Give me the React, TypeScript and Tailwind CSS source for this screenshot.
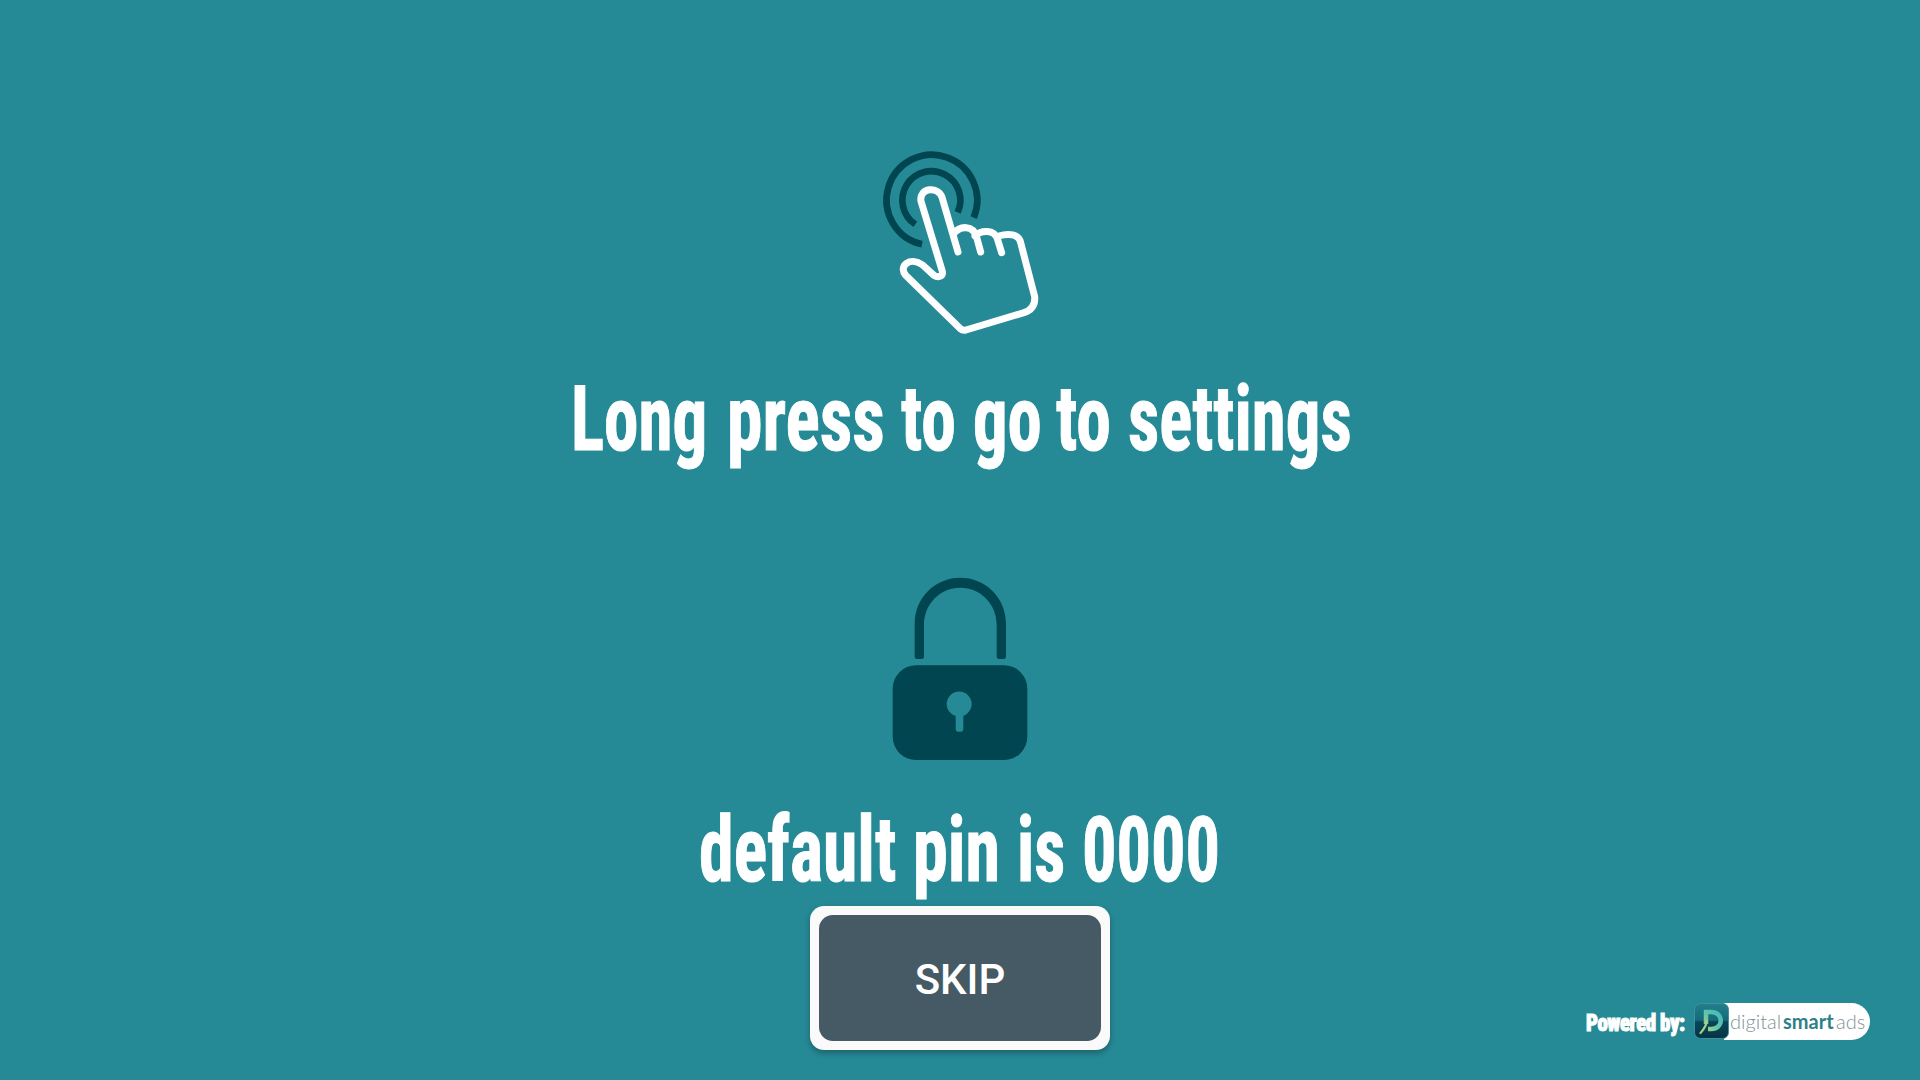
type Word = { text: string; box: string; scale: string };

const pressWords: Word[] = [
  { text: "Long", box: "w-[130px] mr-[26px]", scale: "scale-x-[0.76]" },
  { text: "press", box: "w-[154px] mr-[20px]", scale: "scale-x-[0.787]" },
  { text: "to", box: "w-[53px] mr-[19px]", scale: "scale-x-[0.765]" },
  { text: "go", box: "w-[63px] mr-[20px]", scale: "scale-x-[0.755]" },
  { text: "to", box: "w-[53px] mr-[19px]", scale: "scale-x-[0.765]" },
  { text: "settings", box: "w-[220px]", scale: "scale-x-[0.757]" },
];

const pinWords: Word[] = [
  { text: "default", box: "w-[193px] mr-[21px]", scale: "scale-x-[0.768]" },
  { text: "pin", box: "w-[81px] mr-[23px]", scale: "scale-x-[0.772]" },
  { text: "is", box: "w-[45px] mr-[20px]", scale: "scale-x-[0.75]" },
  { text: "0000", box: "w-[134px]", scale: "scale-x-[0.75]" },
];

function Headline({ words }: { words: Word[] }) {
  return (
    <h1 className="flex h-[100px] font-['Roboto_Condensed','Roboto',sans-serif] text-[91px] font-bold leading-[100px] text-white [-webkit-text-stroke:1px_#fff]">
      {words.map((word, i) => (
        <span key={i} className={`block whitespace-nowrap ${word.box}`}>
          <span className={`inline-block origin-left ${word.scale}`}>{word.text}</span>
        </span>
      ))}
    </h1>
  );
}

function TouchIcon() {
  return (
    <svg className="h-[220px] w-[200px]" viewBox="0 0 600 660" fill="none">
      <g stroke="#00454f" strokeWidth="20">
        <path d="M341 263 A136 136 0 1 0 186 343" />
        <path d="M293 247 A87 87 0 1 0 166 283" />
      </g>
      <path
        stroke="#fff"
        strokeWidth="21"
        strokeLinecap="round"
        strokeLinejoin="round"
        d="M294 366 L246 202 C236 168 176 172 183 214 L247 424 C250 440 234 444 222 436 L188 405 C150 378 114 408 137 436 L302 597 Q308 602 318 600 L492 548 Q527 536 524 500 L482 338 C476 312 446 309 416 318 M280 312 C300 286 340 284 350 322 L362 366 M345 318 C364 300 402 298 412 326 L425 368"
      />
    </svg>
  );
}

function LockIcon() {
  return (
    <svg className="h-[220px] w-[180px]" viewBox="0 0 540 660" fill="none">
      <path
        fill="#00454f"
        d="M134 290 V192 C134 110 198 53 271 53 C344 53 408 110 408 192 V290 Q408 297 401 297 H387 Q380 297 380 290 V195 C380 130 330 83 271 83 C212 83 162 130 162 195 V290 Q162 297 155 297 H141 Q134 297 134 290 Z"
      />
      <rect x="68" y="316" width="404" height="284" rx="70" fill="#00454f" />
      <path
        fill="#268a96"
        d="M257 508 V468 C242 463 230 450 230 432 A37.500 37.500 0 0 1 305 432 C305 450 292 462 280 468 V508 Q280 515 273 515 H264 Q257 515 257 508 Z"
      />
    </svg>
  );
}

function BrandMark() {
  return (
    <svg className="relative h-9 w-[35px] shrink-0" viewBox="0 0 35 36" fill="none">
      <defs>
        <linearGradient id="tile" x1="0" y1="0" x2="0" y2="1">
          <stop offset="0" stopColor="#23808c" />
          <stop offset="0.48" stopColor="#15697a" />
          <stop offset="0.52" stopColor="#07465a" />
          <stop offset="1" stopColor="#053445" />
        </linearGradient>
        <linearGradient id="letter" x1="0" y1="1" x2="1" y2="0">
          <stop offset="0" stopColor="#a5cf8b" />
          <stop offset="0.5" stopColor="#5fc3ab" />
          <stop offset="1" stopColor="#3fb9b9" />
        </linearGradient>
      </defs>
      <rect x="0.500" y="0.500" width="34" height="35" rx="6" fill="url(#tile)" stroke="#3c929a" />
      <path d="M12 7 V21 M10 9 H17 C30 9 30 26 17 26 H14" stroke="url(#letter)" strokeWidth="4.5" />
      <path d="M6.500 30 C9 27 12 24 13 18" stroke="#a5cf8b" strokeWidth="2.200" strokeLinecap="round" />
    </svg>
  );
}

export default function App() {
  return (
    <main className="relative flex h-[1080px] w-[1920px] flex-col items-center overflow-hidden bg-[#268a96]">
      <div className="mt-[130px]">
        <TouchIcon />
      </div>
      <div className="mt-[19px] w-[776px] self-start ml-[571px]">
        <Headline words={pressWords} />
      </div>

      <div className="mt-[91px]">
        <LockIcon />
      </div>
      <div className="mt-[20px] w-[517px] self-start ml-[699px]">
        <Headline words={pinWords} />
      </div>

      <button className="mt-[6px] flex h-36 w-[300px] shrink-0 rounded-[14px] bg-[#fafafa] p-[9px] shadow-[0_3px_6px_rgba(0,0,0,0.3)]">
        <span className="flex flex-1 items-center justify-center self-stretch rounded-[14px] bg-[#455a64] pt-[3px] font-['Roboto',sans-serif] text-[42px] font-medium leading-none text-white">
          SKIP
        </span>
      </button>

      {/* Branding */}
      <footer className="absolute left-[1586px] top-[1003px] flex h-9 items-center">
        <span className="w-[108px] whitespace-nowrap pt-[7px] font-['Roboto_Condensed','Roboto',sans-serif] text-[23px] font-black tracking-[-0.5px] text-white [-webkit-text-stroke:1px_#fff]">
          <span className="inline-block origin-left scale-x-[0.91]">Powered by:</span>
        </span>
        <BrandMark />
        <div className="-ml-[5px] flex h-[37px] w-[146px] items-center gap-[3px] rounded-r-full bg-white pb-px pl-[6px] font-['Lato',sans-serif] text-[20px] leading-none text-[#7f9196]">
          <span className="w-[50px] font-light">digital</span>
          <span className="w-[50px] font-bold text-[#2f7f8b]">smart</span>
          <span className="font-light">ads</span>
        </div>
      </footer>
    </main>
  );
}
